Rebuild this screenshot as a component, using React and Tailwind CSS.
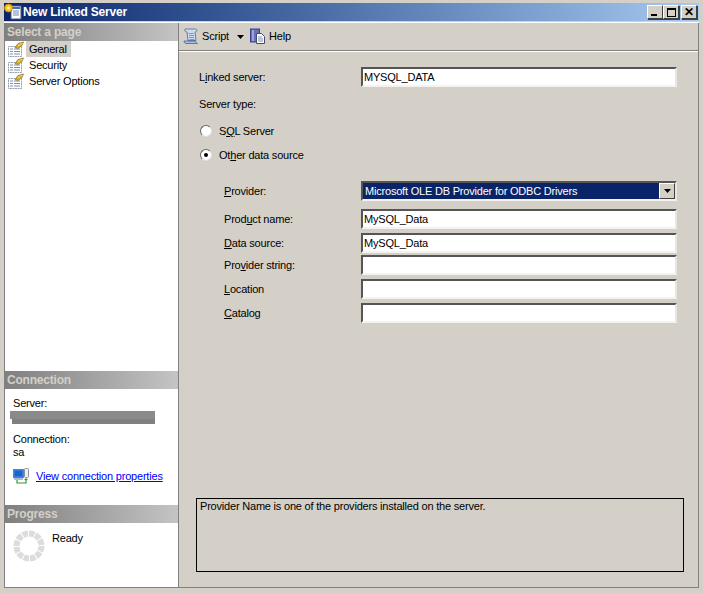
const PageIcon = () => (
  <svg width="16" height="16" viewBox="0 0 16 16" className="shrink-0">
    <path d="M0.500 5.500h13v10h-13Z" fill="#fff" stroke="#9aa3b5" strokeDasharray="2 0.500" />
    <path d="M2 8h3M6 8h6" stroke="#7d8fb5" />
    <path d="M2 10.500h3M6 10.500h6" stroke="#7d8fb5" />
    <path d="M2 13h3M6 13h6" stroke="#7d8fb5" />
    <path d="M7 6.500 L10 2.500 L15.500 1 L14 4.500 L10 7.500 Z" fill="#d9b02c" stroke="#6e5a14" strokeWidth="0.600" />
    <path d="M10 5l2.500-2 2-0.500" stroke="#fff0a0" strokeWidth="0.800" fill="none" />
  </svg>
);

const TitleIcon = () => (
  <svg width="18" height="18" viewBox="0 0 18 18" className="shrink-0">
    <rect x="7" y="3" width="10" height="13" fill="#fff" stroke="#44598c" />
    <rect x="8" y="4" width="8" height="2" fill="#3e6fc0" />
    <path d="M9 8h6M9 10h6M9 12h6" stroke="#6f86b4" />
    <circle cx="4.500" cy="5" r="4" fill="#f5c518" stroke="#c07f10" strokeWidth="0.800" />
    <circle cx="4.500" cy="5" r="1.500" fill="#fff0a0" />
  </svg>
);

const ScriptIcon = () => (
  <svg width="16" height="17" viewBox="0 0 16 17" className="shrink-0">
    <path d="M2 1h10c1 0 2 .7 2 1.500s-1 1.500-2 1.500l1 8.500H5L4 4C3 4 1 3 2 1Z" fill="#cfdaef" stroke="#4b6697" strokeWidth="0.800" />
    <path d="M5.500 5.500h5M6 7.500h5M6 9.500h5M6.500 11.500h5" stroke="#6b86b6" strokeWidth="0.800" />
    <path d="M1 13h11c.5 1 1.500 2 2.500 2.500H3C2 15.500 1 14.500 1 13Z" fill="#a9bcdc" stroke="#4b6697" strokeWidth="0.800" />
  </svg>
);

const HelpIcon = () => (
  <svg width="16" height="17" viewBox="0 0 16 17" className="shrink-0">
    <rect x="0.500" y="1" width="9" height="13" fill="#6a6fb5" stroke="#3a3f85" />
    <rect x="2" y="2" width="2" height="11" fill="#9ea3da" />
    <path d="M6.500 5.500h5l3 3v7h-8Z" fill="#fff" stroke="#3f4b73" />
    <path d="M8 9h4M8 11h5M8 13h5" stroke="#7f8db0" />
  </svg>
);

const ConnectionIcon = () => (
  <svg width="16" height="16" viewBox="0 0 16 16" className="shrink-0">
    <rect x="0.500" y="1.500" width="10" height="8" fill="#2f7de0" stroke="#6a7fa0" />
    <rect x="2" y="3" width="7" height="5" fill="#1b62d0" />
    <rect x="1" y="10" width="9" height="2" fill="#b0b8c8" />
    <rect x="11.500" y="0.500" width="4" height="9" rx="1" fill="#f0f0f0" stroke="#8a8f9a" />
    <path d="M4 12v3h9v-4" stroke="#2e9a2e" strokeWidth="1.200" fill="none" />
    <path d="M11 12l2-2 2 2Z" fill="#2e9a2e" />
  </svg>
);

const Spinner = () => (
  <svg width="32" height="32" viewBox="0 0 32 32" className="shrink-0">
    <circle cx="16" cy="16" r="12.500" fill="none" stroke="#dcdcdc" strokeWidth="6" strokeDasharray="5.500 1" />
  </svg>
);

const WinBtn = ({ children }) => (
  <div className="w-[16px] h-[14px] bg-[#d4d0c8] border border-[#fff] border-r-[#404040] border-b-[#404040] flex items-center justify-center shadow-[1px_1px_0_#404040]">
    {children}
  </div>
);

const SectionHead = ({ children }) => (
  <div className="h-[18px] shrink-0 pl-[2px] flex items-center bg-gradient-to-r from-[#808080] to-[#c4c4c4] text-[#d4d0c8] font-bold text-[12px] tracking-[-0.2px]">
    {children}
  </div>
);

const Field = ({ value }) => (
  <div className="w-[316px] h-[20px] bg-white border-2 border-[#555] border-r-[#e8e6e0] border-b-[#f4f3ef] flex items-center pl-px text-black">
    {value}
  </div>
);

const Radio = ({ on }) => (
  <div className="w-[12px] h-[12px] rounded-full bg-white border border-[#666] border-r-[#ddd] border-b-[#ddd] flex items-center justify-center">
    {on && <div className="w-[4px] h-[4px] rounded-full bg-black" />}
  </div>
);

const rows = [
  { label: <>Prod<u>u</u>ct name:</>, value: 'MySQL_Data', mb: 'mb-[4px]' },
  { label: <><u>D</u>ata source:</>, value: 'MySQL_Data', mb: 'mb-[2px]' },
  { label: <>Pro<u>v</u>ider string:</>, value: '', mb: 'mb-[4px]' },
  { label: <><u>L</u>ocation</>, value: '', mb: 'mb-[4px]' },
  { label: <><u>C</u>atalog</>, value: '', mb: '' },
];

export default function App() {
  return (
    <div className="w-[703px] h-[593px] overflow-hidden bg-[#d4d0c8] flex flex-col pt-[3px] pl-[4px] pr-[4px] font-['Liberation_Sans',Arial,sans-serif] text-[11px] tracking-[-0.2px] text-black">
      {/* Title bar */}
      <div className="h-[18px] shrink-0 flex items-center justify-between bg-gradient-to-r from-[#0a246a] to-[#a6caf0] pr-[2px]">
        <div className="flex items-center gap-px">
          <TitleIcon />
          <span className="text-white font-bold text-[12px] tracking-[-0.2px]">New Linked Server</span>
        </div>
        <div className="flex items-center">
          <WinBtn><div className="w-[6px] h-[2px] bg-black mt-[6px] -ml-[2px]" /></WinBtn>
          <WinBtn><div className="w-[9px] h-[9px] border border-black border-t-2" /></WinBtn>
          <div className="w-[2px]" />
          <WinBtn><span className="font-bold text-[12px] leading-none">✕</span></WinBtn>
        </div>
      </div>

      <div className="h-[2px] shrink-0 border-b border-[#fff]" />

      {/* Body */}
      <div className="w-[695px] h-[565px] flex border border-[#808080] border-t-0">
        {/* Left panel */}
        <div className="w-[174px] shrink-0 flex flex-col bg-white border-r border-[#808080]">
          <SectionHead>Select a page</SectionHead>
          <div className="h-[330px] shrink-0 flex flex-col pl-[3px]">
            <div className="h-[16px] flex items-center gap-[3px]">
              <PageIcon />
              <span className="bg-[#d4d0c8] h-[16px] flex items-center px-[3px] -ml-[1px] w-[45px]">General</span>
            </div>
            <div className="h-[16px] flex items-center gap-[5px]"><PageIcon />Security</div>
            <div className="h-[16px] flex items-center gap-[5px]"><PageIcon />Server Options</div>
          </div>

          <SectionHead>Connection</SectionHead>
          <div className="h-[116px] shrink-0 pl-[8px] pt-[7px] flex flex-col">
            <div className="leading-[14px]">Server:</div>
            <div className="w-[145px] h-[8px] bg-[#8a8a8a] mt-px -ml-[3px]" />
            <div className="w-[143px] h-[5px] bg-[#808080] -ml-[1px]" />
            <div className="leading-[13px] mt-[9px]">Connection:</div>
            <div className="leading-[13px]">sa</div>
            <div className="flex items-center gap-[7px] mt-[9px] whitespace-nowrap">
              <ConnectionIcon />
              <span className="text-[#0000ff] underline">View connection properties</span>
            </div>
          </div>

          <SectionHead>Progress</SectionHead>
          <div className="flex-1 flex pl-[8px] pt-[7px] gap-[7px]">
            <Spinner />
            <span className="leading-[14px] mt-[1px]">Ready</span>
          </div>
        </div>

        {/* Right panel */}
        <div className="flex-1 flex flex-col">
          <div className="h-[28px] shrink-0 flex items-center pl-[4px] border-b border-[#808080] shadow-[0_1px_0_#fff]">
            <ScriptIcon />
            <span className="ml-[3px] w-[27px]">Script</span>
            <svg width="7" height="4" viewBox="0 0 7 4" className="ml-[8px] mr-[6px]"><path d="M0 0h7L3.500 4Z" fill="#000" /></svg>
            <HelpIcon />
            <span className="ml-[3px]">Help</span>
          </div>

          <div className="flex-1 flex flex-col pl-[20px] pt-[16px] pb-[15px]">
            <div className="flex items-center">
              <span className="w-[162px]">L<u>i</u>nked server:</span>
              <Field value="MYSQL_DATA" />
            </div>
            <div className="mt-[10px] leading-[14px]">Server type:</div>
            <div className="flex items-center gap-[7px] mt-[13px] h-[14px] pl-px">
              <Radio /> <span>S<u>Q</u>L Server</span>
            </div>
            <div className="flex items-center gap-[7px] mt-[10px] h-[14px] pl-px">
              <Radio on /> <span>Ot<u>h</u>er data source</span>
            </div>

            <div className="flex flex-col pl-[25px] mt-[19px]">
              <div className="flex items-center mb-[8px]">
                <span className="w-[137px]"><u>P</u>rovider:</span>
                <div className="w-[316px] h-[20px] bg-[#0a246a] border-2 border-[#555] border-r-[#e8e6e0] border-b-[#f4f3ef] flex items-center justify-between text-white">
                  <span className="pl-[2px]">Microsoft OLE DB Provider for ODBC Drivers</span>
                  <div className="w-[16px] h-[16px] bg-[#d4d0c8] border border-white border-r-[#404040] border-b-[#404040] flex items-center justify-center">
                    <svg width="7" height="4" viewBox="0 0 7 4"><path d="M0 0h7L3.500 4Z" fill="#000" /></svg>
                  </div>
                </div>
              </div>
              {rows.map((r, i) => (
                <div key={i} className={`flex items-center ${r.mb}`}>
                  <span className="w-[137px]">{r.label}</span>
                  <Field value={r.value} />
                </div>
              ))}
            </div>

            <div className="mt-auto ml-[-3px] w-[488px] h-[74px] border border-black px-[3px] leading-[14px]">
              Provider Name is one of the providers installed on the server.
            </div>
          </div>
        </div>
      </div>
    </div>
  );
}
